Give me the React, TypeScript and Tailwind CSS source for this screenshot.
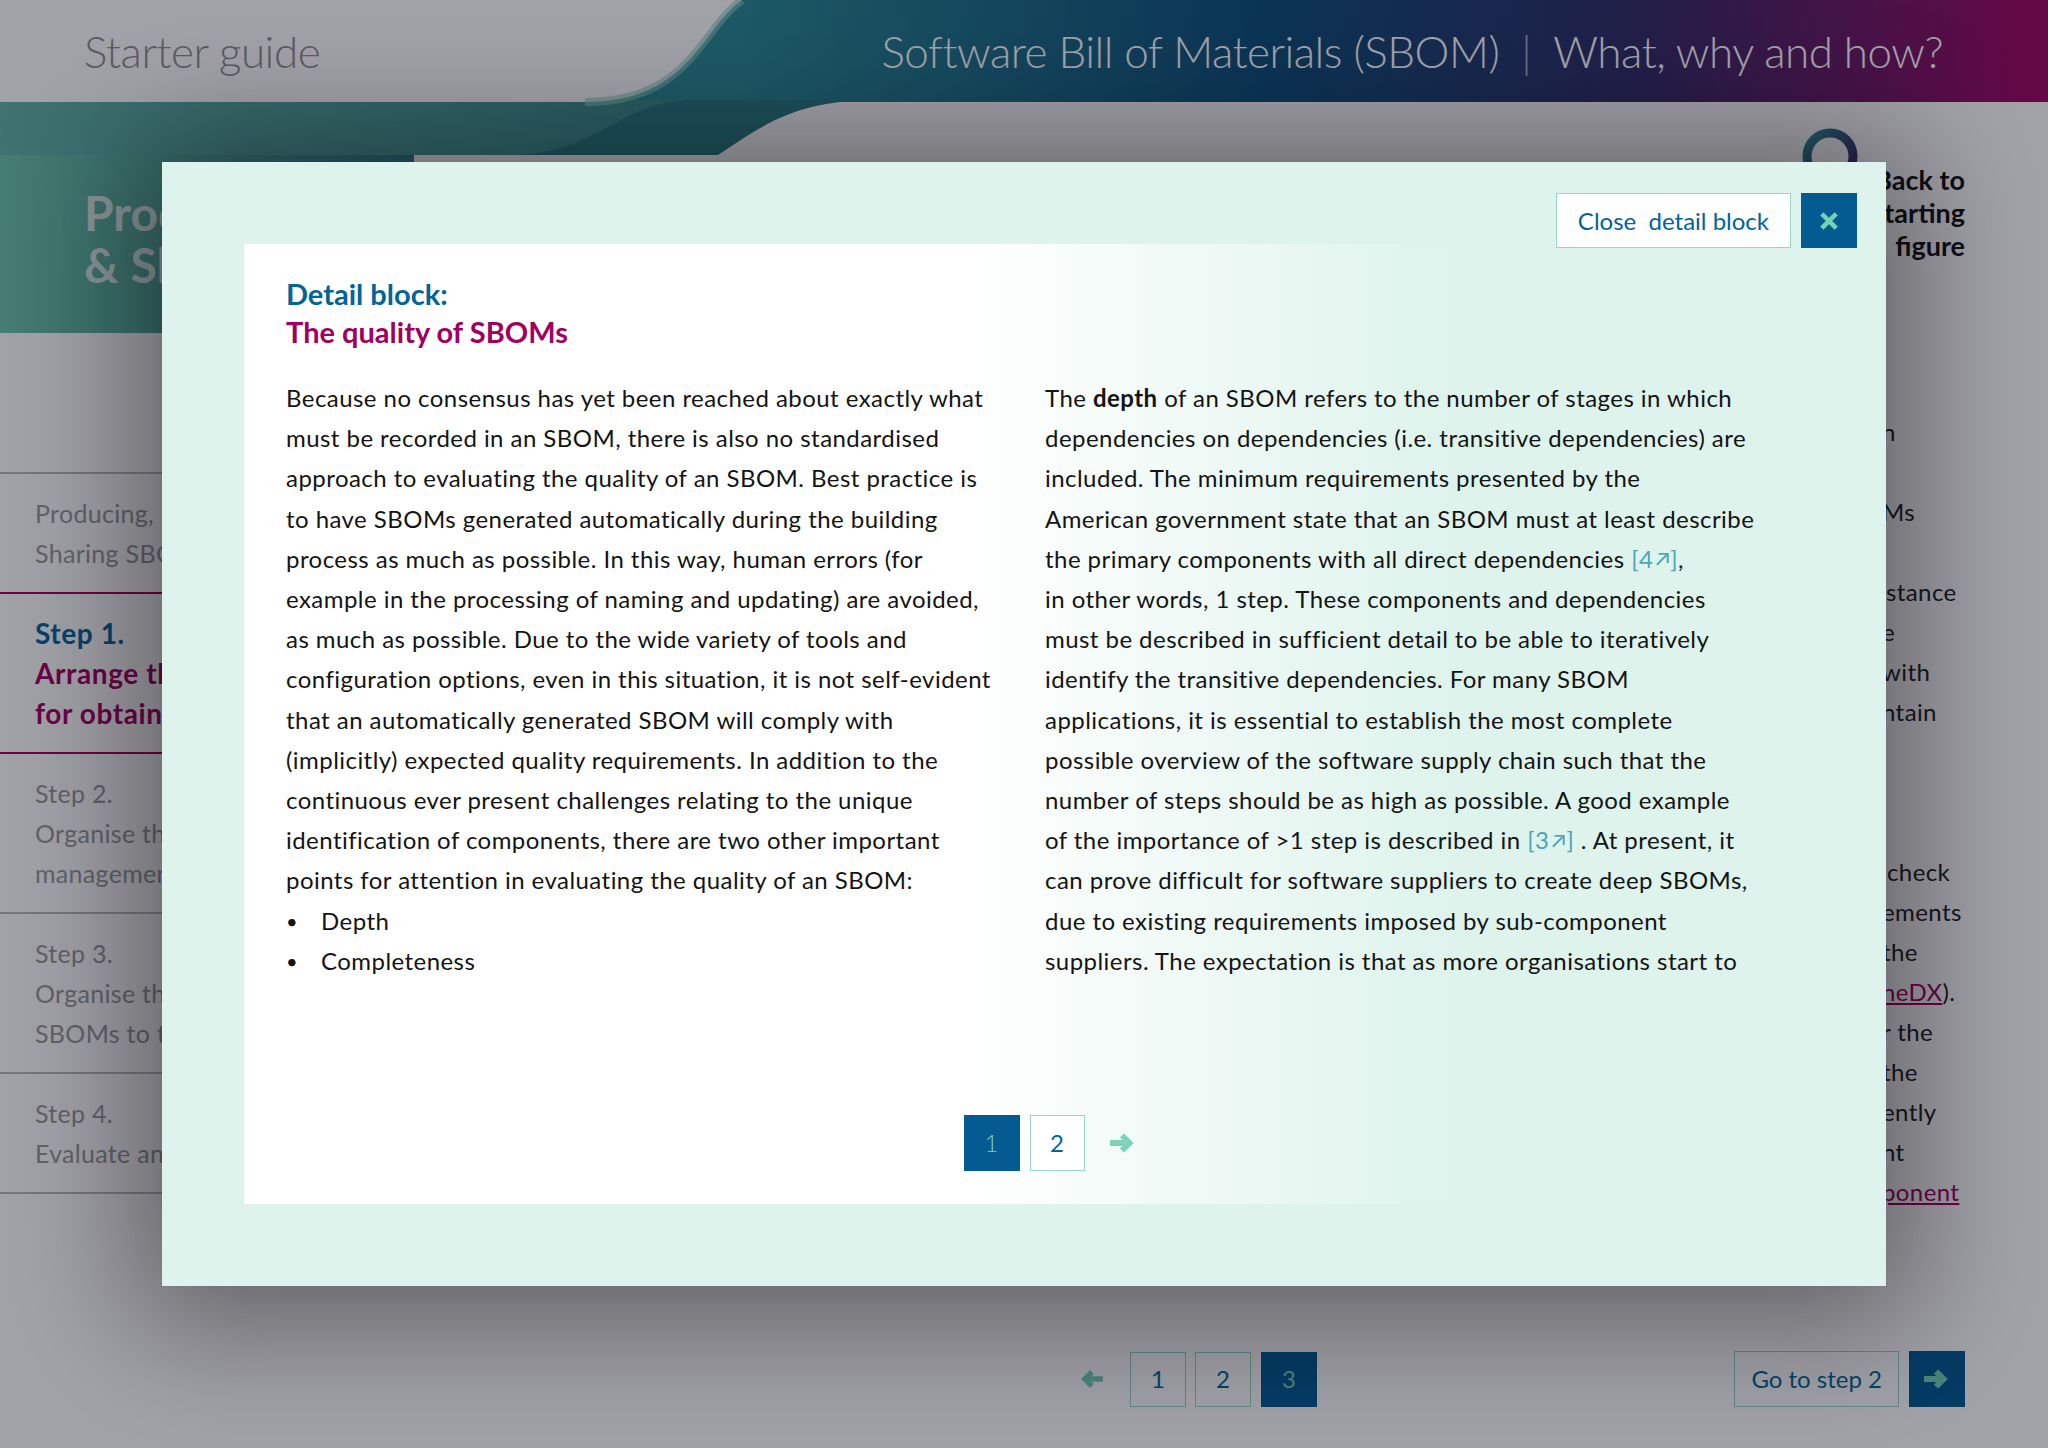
import React from "react";

function Arrow({ dir = "right", className = "" }: { dir?: "right" | "left"; className?: string }) {
  return (
    <svg viewBox="0 0 26 22" className={className} fill="none" stroke="currentColor" strokeWidth={6}>
      {dir === "right" ? (
        <>
          <path d="M0 11H20" />
          <path d="M12 3.5l7.5 7.5-7.5 7.5" />
        </>
      ) : (
        <>
          <path d="M26 11H6" />
          <path d="M14 3.5L6.5 11l7.5 7.5" />
        </>
      )}
    </svg>
  );
}

function ExtLink({ n }: { n: string }) {
  return (
    <span className="text-[#4ea5ba]">
      [{n}
      <svg viewBox="0 0 14 14" className="mb-[5px] ml-[1px] inline-block h-[16px] w-[16px]" fill="none" stroke="currentColor" strokeWidth={1.7}>
        <path d="M2.5 12L11.5 3" />
        <path d="M4 2.5H12V10.5" />
      </svg>
      ]
    </span>
  );
}

const col1 = [
  "Because no consensus has yet been reached about exactly what",
  "must be recorded in an SBOM, there is also no standardised",
  "approach to evaluating the quality of an SBOM. Best practice is",
  "to have SBOMs generated automatically during the building",
  "process as much as possible. In this way, human errors (for",
  "example in the processing of naming and updating) are avoided,",
  "as much as possible. Due to the wide variety of tools and",
  "configuration options, even in this situation, it is not self-evident",
  "that an automatically generated SBOM will comply with",
  "(implicitly) expected quality requirements. In addition to the",
  "continuous ever present challenges relating to the unique",
  "identification of components, there are two other important",
  "points for attention in evaluating the quality of an SBOM:",
];

/* Right edges of the page's paragraph lines that stay visible beside the dialog */
const bgLines: React.ReactNode[] = [
  "n",
  "",
  "Ms",
  "",
  <span className="pl-[4px]">stance</span>,
  "e",
  "with",
  "ntain",
  "",
  "",
  "",
  <span className="pl-[5px]">check</span>,
  "ements",
  "the",
  <>
    <span className="text-[#a90061] underline">neDX</span>).
  </>,
  "r the",
  "the",
  "ently",
  "nt",
  <span className="text-[#a90061] underline">ponent</span>,
];

export default function App() {
  return (
    <div className="relative h-[1448px] w-full overflow-hidden bg-white [font-family:Lato,'Noto_Sans',sans-serif]">
      {/* Page header */}
      <header className="relative h-[155px]">
        <svg className="absolute inset-0 h-full w-full" viewBox="0 0 2048 155" preserveAspectRatio="none">
          <defs>
            <linearGradient id="hdr" x1="0" x2="1" y1="0" y2="0">
              <stop offset="0" stopColor="#2c9095" />
              <stop offset="0.36" stopColor="#2a8a92" />
              <stop offset="0.62" stopColor="#0d4f78" />
              <stop offset="0.8" stopColor="#312d65" />
              <stop offset="1" stopColor="#a0075f" />
            </linearGradient>
            <linearGradient id="band" x1="0" x2="1" y1="0" y2="0">
              <stop offset="0" stopColor="#62b3a6" />
              <stop offset="1" stopColor="#3a8d8c" />
            </linearGradient>
          </defs>
          <rect x="0" y="0" width="2048" height="102" fill="url(#hdr)" />
          <rect x="0" y="102" width="2048" height="53" fill="#ffffff" />
          <path d="M0 100 H880 C800 100 770 120 718 155 H0 Z" fill="#2a7c83" />
          <path d="M0 100 H690 C620 102 600 150 520 155 H0 Z" fill="url(#band)" />
          <path d="M0 0 H742 C700 30 690 102 585 102 H0 Z" fill="#ffffff" />
          <path d="M742 0 C700 30 690 102 585 102" fill="none" stroke="#8fcfc3" strokeWidth="8" opacity="0.6" />
        </svg>
        <div className="relative flex h-[102px] items-center justify-between pl-[84px] pr-[105px]">
          <span className="text-[44px] font-light tracking-[-0.5px] text-[#8f8f8f]">Starter guide</span>
          <span className="text-[44px] font-light tracking-[-0.5px] text-white">
            Software Bill of Materials (SBOM)
            <span className="mx-[22px] text-white/60">|</span>
            What, why and how?
          </span>
        </div>
      </header>

      <div className="flex h-[1293px]">
        {/* Sidebar */}
        <aside className="w-[414px] shrink-0">
          <div className="h-[178px] bg-[linear-gradient(to_right,#6cc4a7,#2f8189)] pl-[84px] pt-[32px] text-[48px] font-bold leading-[52px] text-white/75">
            <div className="w-[160px] overflow-hidden whitespace-nowrap">
              Producing
              <br />
              &amp; Sharing
            </div>
          </div>
          <nav className="mt-[139px] border-t-2 border-[#b9b9b9] text-[25px] leading-[40px] tracking-[0.3px]">
            <div className="border-b-2 border-[#a90061] py-[19px] pl-[35px] text-[#999999]">
              <div className="w-[200px] overflow-hidden whitespace-nowrap">
                Producing,&nbsp; Storing and
                <br />
                Sharing SBOMs
              </div>
            </div>
            <div className="border-b-2 border-[#a90061] py-[19px] pl-[35px] text-[28px] font-bold tracking-[0.6px]">
              <div className="w-[200px] overflow-hidden whitespace-nowrap">
                <span className="block text-[#01689b]">Step 1.</span>
                <span className="block text-[#a90061]">Arrange the conditions</span>
                <span className="block text-[#a90061]">for obtaining SBOMs</span>
              </div>
            </div>
            <div className="border-b-2 border-[#b9b9b9] py-[19px] pl-[35px] text-[#999999]">
              <div className="w-[200px] overflow-hidden whitespace-nowrap">
                Step 2.
                <br />
                Organise the
                <br />
                management of SBOMs
              </div>
            </div>
            <div className="border-b-2 border-[#b9b9b9] py-[19px] pl-[35px] text-[#999999]">
              <div className="w-[200px] overflow-hidden whitespace-nowrap">
                Step 3.
                <br />
                Organise the supply of
                <br />
                SBOMs to third parties
              </div>
            </div>
            <div className="border-b-2 border-[#b9b9b9] py-[19px] pl-[35px] text-[#999999]">
              <div className="w-[200px] overflow-hidden whitespace-nowrap">
                Step 4.
                <br />
                Evaluate and improve
              </div>
            </div>
          </nav>
        </aside>

        {/* Main content */}
        <main className="flex flex-1 flex-col pb-[41px] pl-[56px] pr-[83px]">
          <div className="relative -mt-[27px] flex justify-end">
            <svg viewBox="0 0 56 56" className="h-[56px] w-[56px]">
              <defs>
                <linearGradient id="ring" x1="0" x2="1" y1="0" y2="1">
                  <stop offset="0" stopColor="#2c9095" />
                  <stop offset="1" stopColor="#42145f" />
                </linearGradient>
              </defs>
              <circle cx="28" cy="28" r="23" fill="none" stroke="url(#ring)" strokeWidth="9" />
            </svg>
            <div className="ml-[14px] mt-[35px] text-right text-[27px] font-bold leading-[33px] text-[#111111]">
              Back to
              <br />
              starting
              <br />
              figure
            </div>
          </div>
          <div className="mt-[150px] text-[24px] leading-[40px] tracking-[0.4px] text-[#222222]">
            {bgLines.map((frag, i) => (
              <div key={i} className="flex h-[40px] items-center whitespace-nowrap">
                <span className="w-[1412px] shrink-0" />
                <span>{frag}</span>
              </div>
            ))}
          </div>
          <div className="mt-auto grid grid-cols-[1fr_auto_1fr] items-center">
            <div />
            <div className="ml-[12px] flex items-center">
              <Arrow dir="left" className="mr-[27px] h-[22px] w-[24px] text-[#76d2b6]" />
              <span className="flex h-[55px] w-[56px] items-center justify-center border-[1.5px] border-[#93d9c3] bg-white text-[24px] text-[#01689b]">1</span>
              <span className="ml-[9px] flex h-[55px] w-[56px] items-center justify-center border-[1.5px] border-[#93d9c3] bg-white text-[24px] text-[#01689b]">2</span>
              <span className="ml-[10px] flex h-[55px] w-[56px] items-center justify-center bg-[#035b92] text-[24px] text-[#76d2b6]">3</span>
              <Arrow className="invisible ml-[27px] h-[22px] w-[24px]" />
            </div>
            <div className="flex items-center justify-self-end">
              <span className="flex h-[56px] items-center border-[1.5px] border-[#93d9c3] bg-white px-[16px] text-[24px] text-[#01689b]">Go to step 2</span>
              <span className="ml-[10px] flex h-[56px] w-[56px] items-center justify-center bg-[#035b92] text-[#76d2b6]">
                <Arrow className="h-[22px] w-[26px]" />
              </span>
            </div>
          </div>
        </main>
      </div>

      {/* Backdrop + detail block dialog */}
      <div className="fixed inset-0 z-50 flex items-center justify-center bg-[rgba(10,10,30,0.38)]">
        <div role="dialog" className="relative h-[1124px] w-[1724px] bg-[#ddf3ec] p-[82px] shadow-[0_10px_120px_30px_rgba(0,0,0,0.4)]">
          <div className="flex h-full flex-col bg-[linear-gradient(to_right,#ffffff_46%,#ddf3ec_78%)] pb-[33px] pl-[42px] pr-[42px] pt-[31px]">
            <h2 className="text-[29px] font-bold leading-[38px]">
              <span className="block text-[#01649a]">Detail block:</span>
              <span className="block text-[#a1005f]">The quality of SBOMs</span>
            </h2>
            <div className="mt-[27px] grid grid-cols-2 gap-x-[42px] text-[24px] leading-[40.2px] tracking-[0.45px] text-[#141414]">
              <div>
                {col1.map((l, i) => (
                  <span key={i} className="block whitespace-nowrap">
                    {l}
                  </span>
                ))}
                <div className="flex">
                  <span className="w-[35px] text-[20px]">•</span>
                  <span>Depth</span>
                </div>
                <div className="flex">
                  <span className="w-[35px] text-[20px]">•</span>
                  <span>Completeness</span>
                </div>
              </div>
              <div className="whitespace-nowrap">
                <span className="block">
                  The <b className="font-bold">depth</b> of an SBOM refers to the number of stages in which
                </span>
                <span className="block">dependencies on dependencies (i.e. transitive dependencies) are</span>
                <span className="block">included. The minimum requirements presented by the</span>
                <span className="block">American government state that an SBOM must at least describe</span>
                <span className="block">
                  the primary components with all direct dependencies <ExtLink n="4" />,
                </span>
                <span className="block">in other words, 1 step. These components and dependencies</span>
                <span className="block">must be described in sufficient detail to be able to iteratively</span>
                <span className="block">identify the transitive dependencies. For many SBOM</span>
                <span className="block">applications, it is essential to establish the most complete</span>
                <span className="block">possible overview of the software supply chain such that the</span>
                <span className="block">number of steps should be as high as possible. A good example</span>
                <span className="block">
                  of the importance of &gt;1 step is described in <ExtLink n="3" /> . At present, it
                </span>
                <span className="block">can prove difficult for software suppliers to create deep SBOMs,</span>
                <span className="block">due to existing requirements imposed by sub-component</span>
                <span className="block">suppliers. The expectation is that as more organisations start to</span>
              </div>
            </div>
            <div className="mt-auto flex items-center justify-center">
              <Arrow dir="left" className="invisible mr-[25px] h-[22px] w-[26px]" />
              <span className="flex h-[56px] w-[56px] items-center justify-center bg-[#035b92] text-[24px] font-light text-[#76d2b6]">1</span>
              <span className="ml-[10px] flex h-[56px] w-[55px] items-center justify-center border-[1.5px] border-[#93d9c3] bg-white text-[24px] text-[#01649a]">2</span>
              <Arrow className="ml-[25px] h-[22px] w-[26px] text-[#7dd3b8]" />
            </div>
          </div>

          <div className="absolute right-[29px] top-[31px] flex gap-[10px]">
            <button className="flex h-[55px] items-center border-[1.5px] border-[#9ad7c3] bg-white px-[21px] text-[24px] text-[#01649a]">
              Close&nbsp; detail block
            </button>
            <button aria-label="Close" className="flex h-[55px] w-[56px] items-center justify-center bg-[#035b92] text-[#76d2b6]">
              <svg viewBox="0 0 20 20" className="h-[18px] w-[18px]" fill="none" stroke="currentColor" strokeWidth={5}>
                <path d="M2 2L18 18M18 2L2 18" />
              </svg>
            </button>
          </div>
        </div>
      </div>
    </div>
  );
}
